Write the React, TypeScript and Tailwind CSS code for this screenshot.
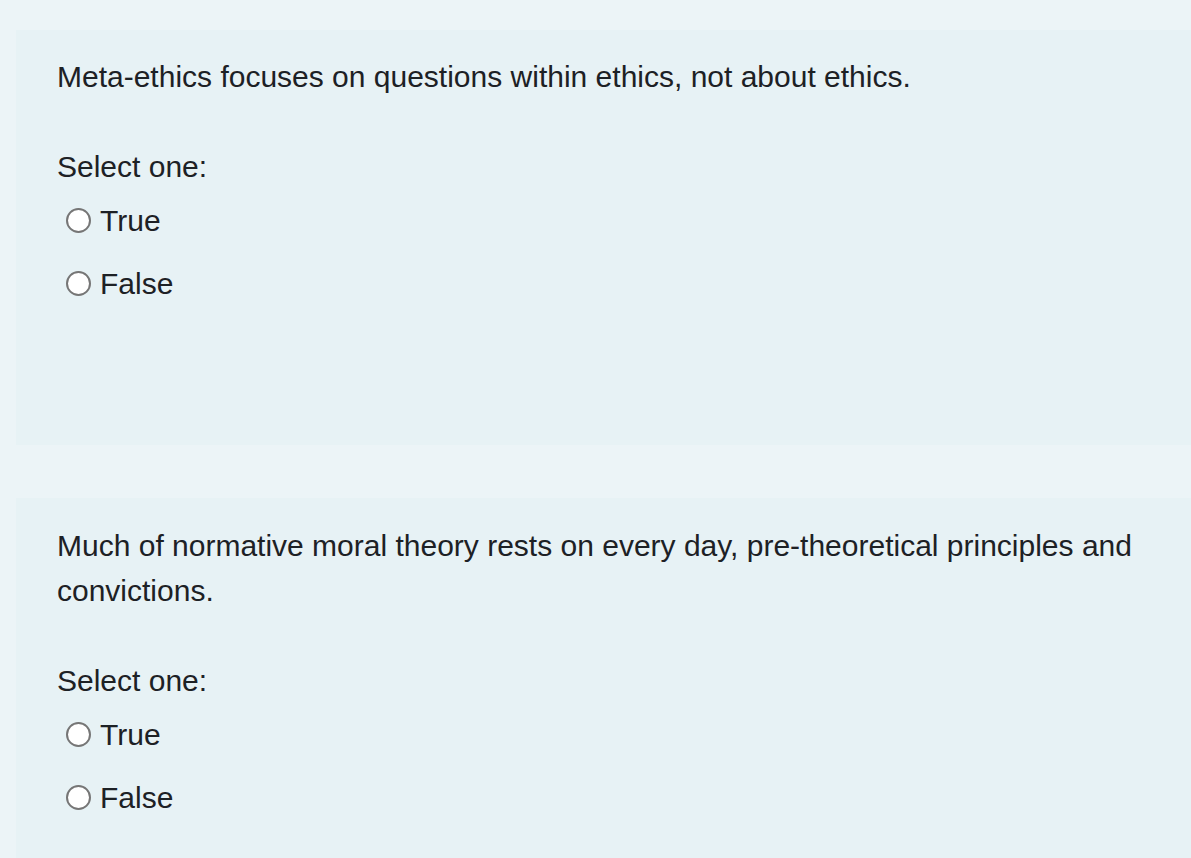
import React from "react";

function Radio({ label }: { label: string }) {
  return (
    <div className="flex items-center h-[44px]">
      <span className="ml-[9px] w-[25px] h-[25px] rounded-full border-2 border-[#767676] bg-white box-border shrink-0" />
      <span className="ml-[9px]">{label}</span>
    </div>
  );
}

function Question({ lines, last }: { lines: string; last?: boolean }) {
  return (
    <div className={`bg-[#e7f2f5] pl-[41px] pr-[40px] pt-[25px] ${last ? "pb-[60px]" : "pb-[140px]"}`}>
      <div className={last ? "leading-[45px]" : "leading-[44px]"}>{lines}</div>
      <div className="mt-[46px] leading-[44px]">Select one:</div>
      <div className="mt-[9px]">
        <Radio label="True" />
      </div>
      <div className="mt-[19px]">
        <Radio label="False" />
      </div>
    </div>
  );
}

export default function App() {
  return (
    <div
      className="min-h-screen bg-[#ecf4f7] pt-[30px] pl-[16px] text-[30px] text-[#1d2125]"
      style={{ fontFamily: '"Liberation Sans", Arial, sans-serif' }}
    >
      <Question lines="Meta-ethics focuses on questions within ethics, not about ethics." />
      <div className="h-[53px]" />
      <Question
        last
        lines="Much of normative moral theory rests on every day, pre-theoretical principles and convictions."
      />
    </div>
  );
}
